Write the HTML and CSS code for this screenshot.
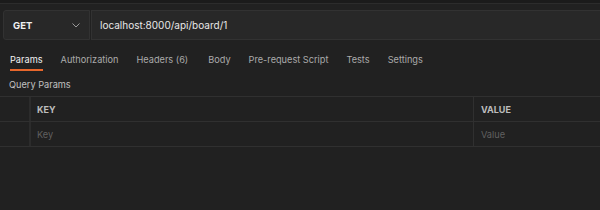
FILE: index.html
```html
<!DOCTYPE html>
<html>
<head>
<meta charset="utf-8">
<link rel="stylesheet" href="styles.css">
</head>
<body>
<div class="app">
  <div class="topstrip"></div>
  <div class="reqbar">
    <div class="method">
      <span class="method-name">GET</span>
      <svg class="chev" width="8" height="5" viewBox="0 0 8 5"><path d="M0.5 0.5 L4 4 L7.5 0.5" fill="none" stroke="#9a9a9a" stroke-width="1"/></svg>
    </div>
    <div class="url">localhost:8000/api/board/1</div>
  </div>
  <div class="tabs">
    <div class="tab active">Params</div>
    <div class="tab">Authorization</div>
    <div class="tab wide">Headers <span class="count">(6)</span></div>
    <div class="tab">Body</div>
    <div class="tab">Pre-request Script</div>
    <div class="tab">Tests</div>
    <div class="tab">Settings</div>
  </div>
  <div class="section-title">Query Params</div>
  <div class="table">
    <div class="row head">
      <div class="cell check"></div>
      <div class="cell key">KEY</div>
      <div class="cell value">VALUE</div>
    </div>
    <div class="row">
      <div class="cell check"></div>
      <div class="cell key ph">Key</div>
      <div class="cell value ph">Value</div>
    </div>
  </div>
</div>
</body>
</html>
```
FILE: styles.css
```css
html, body {
  margin: 0;
  padding: 0;
  background: #212121;
  width: 600px;
  height: 210px;
  overflow: hidden;
}
.app {
  font-family: Inter, "Noto Sans", sans-serif;
  color: #a6a6a6;
  font-size: 9px;
}
.topstrip {
  height: 3px;
  background: #1b1b1b;
  border-bottom: 1px solid #2c2c2c;
}
.reqbar {
  display: flex;
  margin: 6px 0 0 3px;
  height: 30px;
  gap: 1px;
}
.method {
  width: 87px;
  box-sizing: border-box;
  background: #282828;
  border: 1px solid #323232;
  border-radius: 3px 0 0 3px;
  display: flex;
  align-items: center;
  padding: 0 8px 0 9px;
  justify-content: space-between;
}
.method-name {
  color: #f0f0f0;
  font-weight: 700;
  font-size: 9.5px;
}
.chev {
  margin-top: 1px;
  margin-right: 1px;
}
.url {
  flex: 1;
  box-sizing: border-box;
  background: #282828;
  border: 1px solid #323232;
  border-right: none;
  display: flex;
  align-items: center;
  padding-left: 8px;
  color: #e8e8e8;
  font-size: 10px;
}
.tabs {
  display: flex;
  margin-top: 11px;
  padding-left: 10px;
  height: 20px;
  gap: 18px;
}
.tab {
  line-height: 17px;
  color: #ababab;
  font-size: 9.2px;
  box-sizing: border-box;
}
.tab.wide { margin-right: 2px; }
.tab.active {
  color: #f2f2f2;
  border-bottom: 2px solid #e8672c;
  height: 20px;
}
.count { color: #ababab; }
.section-title {
  padding-left: 9px;
  margin-top: 6px;
  color: #c2c2c2;
  font-size: 9.2px;
  line-height: 16px;
}
.table {
  margin-top: 3px;
  border-top: 1px solid #303030;
}
.row {
  display: flex;
  height: 25px;
  box-sizing: border-box;
  border-bottom: 1px solid #303030;
}
.cell {
  display: flex;
  align-items: center;
  box-sizing: border-box;
}
.check {
  width: 31px;
  border-right: 2px solid #2c2c2c;
}
.key {
  width: 443px;
  padding-left: 6px;
  border-right: 1px solid #303030;
}
.value {
  flex: 1;
  padding-left: 7px;
}
.head .cell {
  color: #bdbdbd;
  font-weight: 700;
  font-size: 9px;
}
.ph {
  color: #606060;
  font-size: 9.2px;
}
```
